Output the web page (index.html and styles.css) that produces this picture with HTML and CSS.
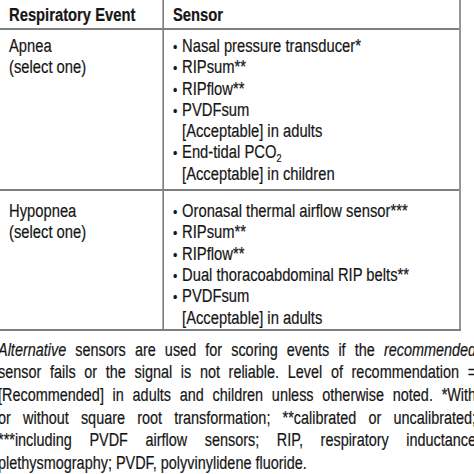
FILE: index.html
```html
<!DOCTYPE html>
<html>
<head>
<meta charset="utf-8">
<link rel="stylesheet" href="styles.css">
</head>
<body>
<div class="page">
  <div class="tbl">
    <div class="row head">
      <div class="c1">Respiratory Event</div>
      <div class="c2">Sensor</div>
    </div>
    <div class="row r1">
      <div class="c1">Apnea<br>(select one)</div>
      <div class="c2">
        <div class="li"><span class="b">•</span>Nasal pressure transducer*</div>
        <div class="li"><span class="b">•</span>RIPsum**</div>
        <div class="li"><span class="b">•</span>RIPflow**</div>
        <div class="li"><span class="b">•</span>PVDFsum</div>
        <div class="li">[Acceptable] in adults</div>
        <div class="li"><span class="b">•</span>End-tidal PCO<sub>2</sub></div>
        <div class="li">[Acceptable] in children</div>
      </div>
    </div>
    <div class="row r2">
      <div class="c1">Hypopnea<br>(select one)</div>
      <div class="c2">
        <div class="li"><span class="b">•</span>Oronasal thermal airflow sensor***</div>
        <div class="li"><span class="b">•</span>RIPsum**</div>
        <div class="li"><span class="b">•</span>RIPflow**</div>
        <div class="li"><span class="b">•</span>Dual thoracoabdominal RIP belts**</div>
        <div class="li"><span class="b">•</span>PVDFsum</div>
        <div class="li">[Acceptable] in adults</div>
      </div>
    </div>
  </div>
  <p class="note">
    <span class="ln"><i>Alternative</i> sensors are used for scoring events if the <i>recommended</i></span>
    <span class="ln">sensor fails or the signal is not reliable. Level of recommendation =</span>
    <span class="ln">[Recommended] in adults and children unless otherwise noted. *With</span>
    <span class="ln">or without square root transformation; **calibrated or uncalibrated;</span>
    <span class="ln">***including PVDF airflow sensors; RIP, respiratory inductance</span>
    <span class="ln last">plethysmography; PVDF, polyvinylidene fluoride.</span>
  </p>
</div>
</body>
</html>
```
FILE: styles.css
```css
html, body {
  margin: 0;
  padding: 0;
  background: #fff;
  overflow: hidden;
}
body {
  width: 474px;
  height: 474px;
  font-family: "Liberation Sans", Arial, sans-serif;
  font-size: 18px;
  line-height: 21.3px;
  color: #161616;
  -webkit-text-stroke: 0.2px #161616;
}
/* whole page condensed horizontally to mimic Arial Narrow */
.page {
  width: 578px;
  transform: scaleX(0.82);
  transform-origin: 0 0;
  display: flex;
  flex-direction: column;
}
.tbl {
  width: 562px;
  box-sizing: border-box;
  border-right: 2.4px solid #808080;
  border-bottom: 2px solid #808080;
}
.row {
  display: grid;
  grid-template-columns: 200px 1fr;
}
.c1 {
  box-sizing: border-box;
  border-right: 2.4px solid #808080;
  padding-left: 11px;
}
.c2 {
  padding-left: 11px;
}
.head {
  border-bottom: 2px solid #808080;
  font-weight: bold;
}
.head .c1, .head .c2 {
  padding-top: 4.5px;
  padding-bottom: 2.2px;
}
.r1 {
  border-bottom: 2px solid #808080;
}
.r1 .c1, .r1 .c2 {
  padding-top: 6px;
  padding-bottom: 4px;
}
.r2 .c1, .r2 .c2 {
  padding-top: 10px;
  padding-bottom: 0;
}
.li {
  padding-left: 11px;
}
.b {
  display: inline-block;
  width: 11px;
  margin-left: -11px;
  font-size: 15px;
  line-height: 1;
}
sub {
  font-size: 11px;
  line-height: 0;
  vertical-align: -4px;
}
.note {
  margin: 8px 0 0 -2.4px;
  width: 583px;
  font-size: 17.6px;
  line-height: 22.6px;
}
.ln {
  display: block;
  text-align: justify;
  text-align-last: justify;
}
.ln.last {
  text-align-last: left;
}
```
